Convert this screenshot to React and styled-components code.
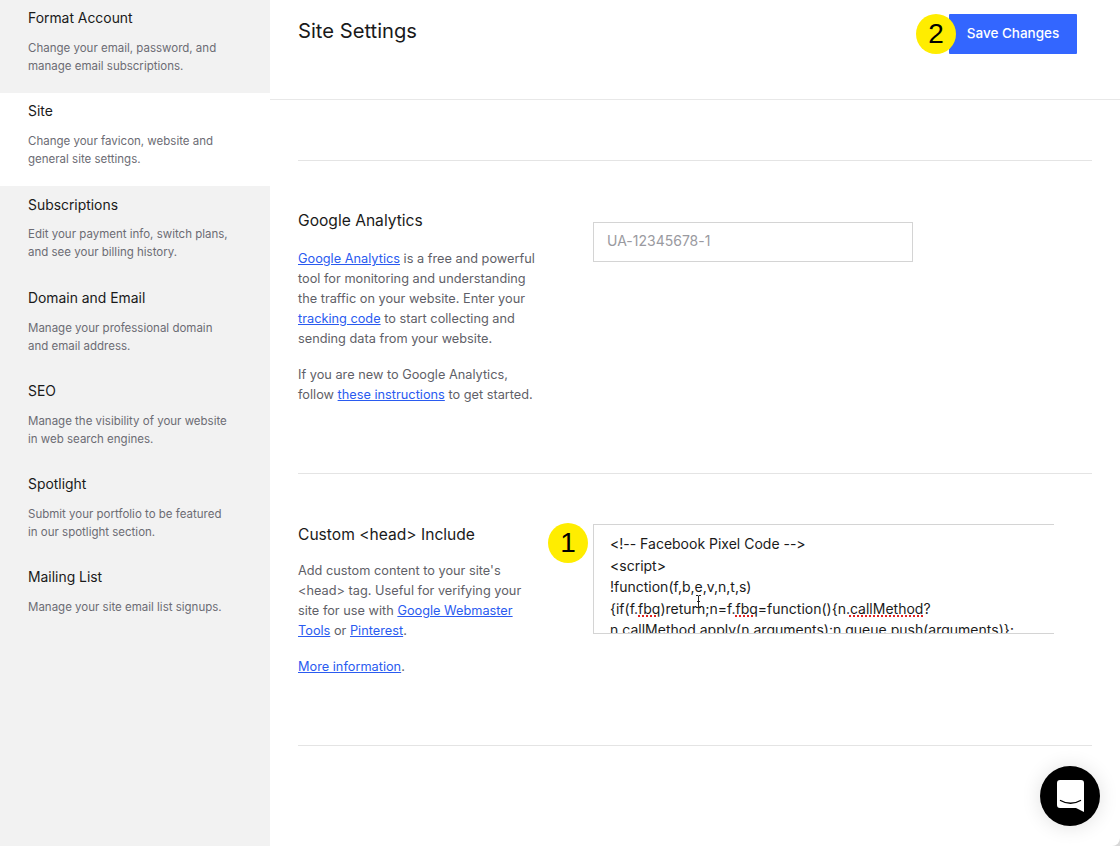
import React from "react";
import styled, { createGlobalStyle } from "styled-components";

const Global = createGlobalStyle`
  html, body { margin: 0; padding: 0; background: #fff; }
  body { font-family: Inter, "Liberation Sans", sans-serif; overflow: hidden; font-variant-ligatures: none; font-feature-settings: "calt" 0, "liga" 0; }
`;
const Page = styled.div`
  width: 1120px; height: 846px; display: flex; overflow: hidden; position: relative; background: #fff;
`;
const Sidebar = styled.nav`
  width: 270px; flex: none; background: #f2f2f2; height: 846px;
`;
const NavItem = styled.div`
  height: 93.2px; box-sizing: border-box; padding: 10.3px 28px 0;
  background: ${p => (p.$active ? "#fff" : "transparent")};
`;
const NavTitle = styled.div`
  font-size: 13.9px; line-height: 17px; color: #1a1a1a; margin-bottom: 11.7px;
`;
const NavText = styled.div`
  font-size: 11.5px; line-height: 18px; color: #6c6c74; white-space: pre-line;
`;
const Main = styled.main`
  flex: 1; min-width: 0; display: flex; flex-direction: column;
`;
const Header = styled.header`
  height: 100px; box-sizing: border-box; border-bottom: 1px solid #e8e8e8;
  display: flex; justify-content: space-between; align-items: flex-start; padding: 14px 43px 0 28px;
`;
const PageTitle = styled.h1`
  margin: 6px 0 0; font-size: 20.2px; line-height: 22px; font-weight: 400; color: #1a1a1a;
`;
const HeaderActions = styled.div`
  display: flex; align-items: center;
`;
const Marker = styled.div`
  width: 40px; height: 40px; border-radius: 50%; background: #ffed00; color: #000;
  display: flex; align-items: center; justify-content: center;
  font-family: "Liberation Sans", Arial, sans-serif; font-size: 28px; line-height: 1; flex: none;
  position: relative; z-index: 1;
`;
const SaveButton = styled.button`
  width: 128px; height: 40px; margin-left: -7px; border: 0; border-radius: 1px; background: #3366ff; color: #fff;
  font: 500 13.5px Inter, sans-serif; padding: 0 0 2px 0; font-feature-settings: "calt" 0;
`;
const Content = styled.div`
  padding: 0 28px; display: flex; flex-direction: column;
`;
const Rule = styled.hr`
  margin: ${p => p.$top}px 0 0; border: 0; border-top: 1px solid #e4e4e4; width: 794px;
`;
const Section = styled.section`
  display: flex; margin-top: ${p => p.$top}px; height: ${p => p.$h}px;
`;
const Copy = styled.div`
  width: 295px; flex: none; padding-top: ${p => p.$pad || 0}px;
`;
const SectionTitle = styled.h2`
  margin: 0 0 ${p => p.$gap}px; font-size: 15.6px; line-height: 20px; font-weight: 400; color: #1a1a1a;
`;
const Para = styled.p`
  margin: 0 0 16px; font-size: 12.75px; line-height: 20px; color: #5f5f68; white-space: nowrap;
`;
const Link = styled.a`
  color: #2a5bf0; text-decoration: underline;
`;
const Field = styled.div`
  width: 320px; height: 40px; box-sizing: border-box; border: 1px solid #d4d4d4; margin-top: 11px;
  padding: 0 13px 4px; display: flex; align-items: center; font-size: 14px; color: #9a9aa0;
`;
const CodeWrap = styled.div`
  position: relative; margin-left: 0; width: 461px; height: 110px;
`;
const CodeBox = styled.div`
  width: 100%; height: 100%; box-sizing: border-box; overflow: hidden;
  border: 1px solid #d4d4d4; border-right: 0; padding: 8px 16px 0;
  font-size: 14px; line-height: 21.5px; color: #1a1a1a; white-space: nowrap;
`;
const Typo = styled.span`
  text-decoration: underline dotted #e02020 1.5px; text-underline-offset: 2px;
`;
const FloatMarker = styled(Marker)`
  position: absolute; left: -45px; top: -1px;
`;
const Caret = styled.svg`
  position: absolute; left: 102px; top: 71px; width: 7px; height: 13px;
`;
const Chat = styled.div`
  position: absolute; left: 1040px; top: 766px; width: 60px; height: 60px; border-radius: 50%;
  background: #000; box-shadow: 0 1px 20px rgba(0,0,0,.12);
  display: flex; align-items: center; justify-content: center;
`;
const Corner = styled.div`
  position: absolute; right: 0; bottom: 0; width: 8px; height: 8px; background: #d8d8d8;
  &::after { content: ""; display: block; width: 8px; height: 8px; background: #fff; border-bottom-right-radius: 8px; }
`;

const nav = [
  ["Format Account", "Change your email, password, and\nmanage email subscriptions."],
  ["Site", "Change your favicon, website and\ngeneral site settings.", true],
  ["Subscriptions", "Edit your payment info, switch plans,\nand see your billing history."],
  ["Domain and Email", "Manage your professional domain\nand email address."],
  ["SEO", "Manage the visibility of your website\nin web search engines."],
  ["Spotlight", "Submit your portfolio to be featured\nin our spotlight section."],
  ["Mailing List", "Manage your site email list signups."],
];

export default function App() {
  return (
    <Page>
      <Global />
      <Sidebar>
        {nav.map(([t, d, a]) => (
          <NavItem key={t} $active={a}>
            <NavTitle>{t}</NavTitle>
            <NavText>{d}</NavText>
          </NavItem>
        ))}
      </Sidebar>
      <Main>
        <Header>
          <PageTitle>Site Settings</PageTitle>
          <HeaderActions>
            <Marker>2</Marker>
            <SaveButton>Save Changes</SaveButton>
          </HeaderActions>
        </Header>
        <Content>
          <Rule $top={60} />
          <Section $top={50} $h={262}>
            <Copy>
              <SectionTitle $gap={18}>Google Analytics</SectionTitle>
              <Para>
                <Link>Google Analytics</Link> is a free and powerful<br />
                tool for monitoring and understanding<br />
                the traffic on your website. Enter your<br />
                <Link>tracking code</Link> to start collecting and<br />
                sending data from your website.
              </Para>
              <Para>
                If you are new to Google Analytics,<br />
                follow <Link>these instructions</Link> to get started.
              </Para>
            </Copy>
            <Field>UA-12345678-1</Field>
          </Section>
          <Rule $top={0} />
          <Section $top={50} $h={221}>
            <Copy $pad={1}>
              <SectionTitle $gap={16}>Custom &lt;head&gt; Include</SectionTitle>
              <Para>
                Add custom content to your site's<br />
                &lt;head&gt; tag. Useful for verifying your<br />
                site for use with <Link>Google Webmaster</Link><br />
                <Link>Tools</Link> or <Link>Pinterest</Link>.
              </Para>
              <Para><Link>More information</Link>.</Para>
            </Copy>
            <CodeWrap>
              <FloatMarker>1</FloatMarker>
              <CodeBox>
                &lt;!-- Facebook Pixel Code --&gt;<br />
                &lt;script&gt;<br />
                !function(f,b,e,v,n,t,s)<br />
                {"{if(f."}<Typo>fbq</Typo>{")return;n=f."}<Typo>fbq</Typo>{"=function(){n."}<Typo>callMethod</Typo>?<br />
                n.callMethod.apply(n,arguments):n.queue.push(arguments)};
              </CodeBox>
              <Caret viewBox="0 0 7 13" fill="none" stroke="#222" strokeWidth="1">
                <path d="M1 .5h2l.5.5.5-.5h2M3.5 1v11M1 12.5h2l.5-.5.5.5h2M2 6.5h3" />
              </Caret>
            </CodeWrap>
          </Section>
          <Rule $top={0} />
        </Content>
      </Main>
      <Chat>
        <svg width="27" height="32" viewBox="0 0 27 32">
          <path d="M3 0h21a3 3 0 0 1 3 3v29l-8-4H3a3 3 0 0 1-3-3V3a3 3 0 0 1 3-3z" fill="#fff" />
          <path d="M3.5 20.5c6 3.6 14 3.6 20 0" fill="none" stroke="#000" strokeWidth="1.4" strokeLinecap="round" />
        </svg>
      </Chat>
      <Corner />
    </Page>
  );
}
